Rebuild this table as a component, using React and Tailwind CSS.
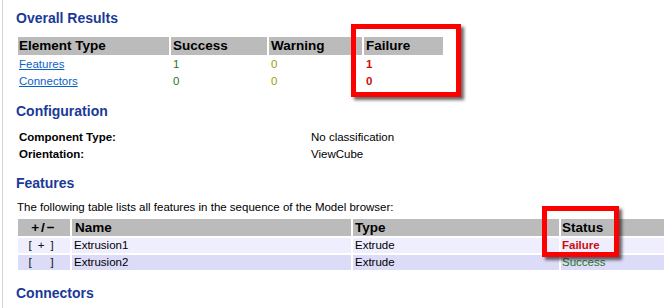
import React from "react";

const overall = [
  { name: "Features", success: 1, warning: 0, failure: 1 },
  { name: "Connectors", success: 0, warning: 0, failure: 0 },
];

const features = [
  { toggle: "+", name: "Extrusion1", type: "Extrude", status: "Failure" },
  { toggle: "", name: "Extrusion2", type: "Extrude", status: "Success" },
];

function Heading({ children, className = "" }) {
  return (
    <h2
      className={`h-[20px] text-[14px] font-bold leading-[20px] text-[#1a3a98] ${className}`}
    >
      {children}
    </h2>
  );
}

function Toggle({ sign }) {
  return (
    <div className="flex justify-center pr-[6px] text-[11.5px] text-[#111]">
      <span className="w-[11px] text-center">[</span>
      <span className="w-[11px] text-center">{sign}</span>
      <span className="w-[11px] text-center">]</span>
    </div>
  );
}

export default function App() {
  return (
    <div className="relative h-[308px] w-[664px] overflow-hidden bg-white font-['Liberation_Sans',Arial,sans-serif] text-black">
      <div className="ml-[2px] h-full border-l border-[#d4d4d4] pl-[13px] pt-[8px]">
        <Heading>Overall Results</Heading>

        <table className="mt-[7px] border-separate border-spacing-[2px] text-left">
          <thead>
            <tr className="h-[18px] bg-[#bbbbbb] text-[13.5px] font-bold leading-[18px]">
              <th className="w-[151px] pl-[1px] font-bold">Element Type</th>
              <th className="w-[96px] pl-[2px] font-bold">Success</th>
              <th className="w-[93px] pl-[2px] font-bold">Warning</th>
              <th className="w-[79px] pl-[2px] font-bold">Failure</th>
            </tr>
          </thead>
          <tbody>
            {overall.map((row) => (
              <tr key={row.name} className="h-[15px] text-[11.5px] leading-[15px]">
                <td className="pl-[1px]">
                  <a href="#" className="text-[#0a62c8] underline">
                    {row.name}
                  </a>
                </td>
                <td className="pl-[2px] text-[#267826]">{row.success}</td>
                <td className="pl-[2px] text-[#a39d00]">{row.warning}</td>
                <td className="pl-[2px] font-bold text-[#d00c0c]">{row.failure}</td>
              </tr>
            ))}
          </tbody>
        </table>

        <Heading className="mt-[10px]">Configuration</Heading>

        <div className="mt-[8px] grid grid-cols-[292px_auto] pl-[3px] text-[11.5px] leading-[17px]">
          <div className="font-bold">Component Type:</div>
          <div>No classification</div>
          <div className="font-bold">Orientation:</div>
          <div>ViewCube</div>
        </div>

        <Heading className="mt-[10px]">Features</Heading>

        <p className="mt-[7px] h-[14px] pl-[1px] text-[11.5px] leading-[14px]">
          The following table lists all features in the sequence of the Model browser:
        </p>

        <table className="mt-[3px] w-[687px] table-fixed border-separate border-spacing-[2px] text-left">
          <thead>
            <tr className="h-[17px] bg-[#bbbbbb] text-[13.5px] leading-[17px]">
              <th className="w-[52px] text-center font-bold tracking-[2px]">+/−</th>
              <th className="w-[279px] pl-[3px] font-bold">Name</th>
              <th className="w-[206px] pl-[2px] font-bold">Type</th>
              <th className="w-[140px] pl-[1px] font-bold">Status</th>
            </tr>
          </thead>
          <tbody>
            {features.map((row, i) => (
              <tr
                key={row.name}
                className={`h-[15px] text-[11.5px] leading-[15px] ${
                  i % 2 === 0 ? "bg-[#eeeeff]" : "bg-[#dcdcf8]"
                }`}
              >
                <td>
                  <Toggle sign={row.toggle} />
                </td>
                <td className="pl-[2px]">{row.name}</td>
                <td className="pl-[2px]">{row.type}</td>
                <td
                  className={`pl-[1px] ${
                    row.status === "Failure"
                      ? "font-bold text-[#d00c0c]"
                      : "text-[#267826]"
                  }`}
                >
                  {row.status}
                </td>
              </tr>
            ))}
          </tbody>
        </table>

        <Heading className="mt-[11px]">Connectors</Heading>
      </div>

      {/* annotation boxes */}
      <div className="absolute left-[351px] top-[24px] h-[73px] w-[110px] border-[5px] border-[#ff0000] shadow-[3px_3px_3px_rgba(0,0,0,0.6)]" />
      <div className="absolute left-[542px] top-[206px] h-[51px] w-[77px] border-[5px] border-[#ff0000] shadow-[3px_3px_3px_rgba(0,0,0,0.6)]" />
    </div>
  );
}
